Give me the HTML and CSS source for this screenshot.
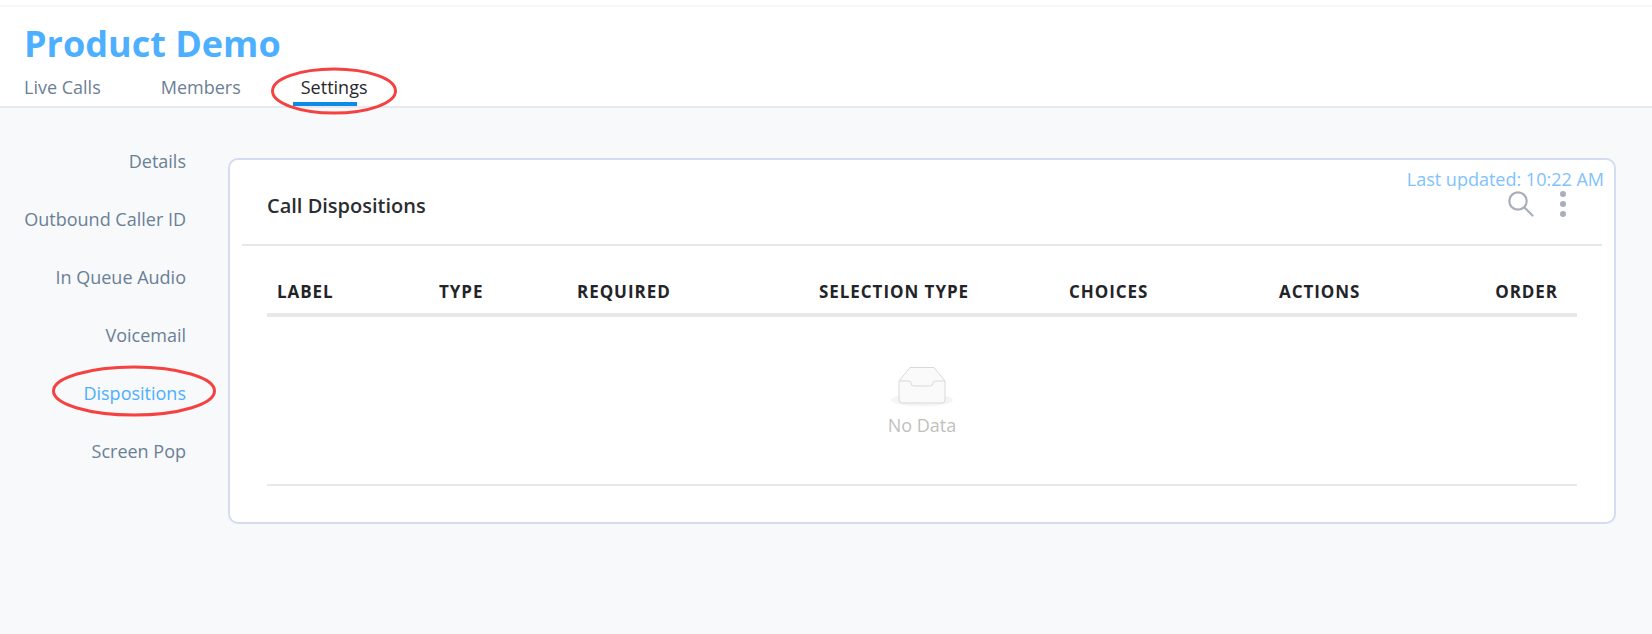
FILE: index.html
```html
<!DOCTYPE html>
<html lang="en">
<head>
<meta charset="utf-8">
<title>Product Demo</title>
<link rel="stylesheet" href="styles.css">
</head>
<body>
<div class="strip"></div>
<header class="top">
  <h1 class="title">Product Demo</h1>
  <nav class="tabs">
    <a class="tab">Live Calls</a>
    <a class="tab">Members</a>
    <a class="tab tab-active">Settings</a>
  </nav>
</header>
<main class="main">
  <aside class="side">
    <a class="side-item">Details</a>
    <a class="side-item">Outbound Caller ID</a>
    <a class="side-item">In Queue Audio</a>
    <a class="side-item">Voicemail</a>
    <a class="side-item side-active">Dispositions</a>
    <a class="side-item">Screen Pop</a>
  </aside>
  <section class="card">
    <div class="updated">Last updated: 10:22 AM</div>
    <div class="card-head">
      <h2 class="card-title">Call Dispositions</h2>
      <div class="tools">
        <svg class="icon-search" width="26" height="26" viewBox="0 0 26 26" fill="none" stroke="#a9afba" stroke-width="2.2"><circle cx="10" cy="10" r="8.7"/><path d="M16.5 16.5l8 8" stroke-linecap="round"/></svg>
        <svg class="icon-more" width="8" height="28" viewBox="0 0 8 28" fill="#a9afba"><circle cx="4" cy="4" r="3"/><circle cx="4" cy="14" r="3"/><circle cx="4" cy="24" r="3"/></svg>
      </div>
    </div>
    <div class="table">
      <div class="thead">
        <div>LABEL</div>
        <div>TYPE</div>
        <div>REQUIRED</div>
        <div>SELECTION TYPE</div>
        <div>CHOICES</div>
        <div>ACTIONS</div>
        <div class="order">ORDER</div>
      </div>
      <div class="empty">
        <svg width="62" height="42" viewBox="0 0 62 42">
          <ellipse cx="31" cy="35" rx="31" ry="6.5" fill="#f5f5f5"/>
          <path d="M8 16L19 2.5H43L54 16V35a3 3 0 0 1-3 3H11a3 3 0 0 1-3-3Z" fill="#fafafa" stroke="#d9d9d9" stroke-width="1"/>
          <path d="M8 16H18a2 2 0 0 1 2 2v0a3 3 0 0 0 3 3H39a3 3 0 0 0 3-3v0a2 2 0 0 1 2-2H54" fill="none" stroke="#d9d9d9" stroke-width="1"/>
        </svg>
        <div class="empty-text">No Data</div>
      </div>
    </div>
  </section>
</main>
<svg class="mark mark-tab" width="128" height="50" viewBox="0 0 128 50"><ellipse cx="64" cy="25" rx="61.5" ry="22"/></svg>
<svg class="mark mark-side" width="166" height="54" viewBox="0 0 166 54"><ellipse cx="83" cy="27" rx="80.5" ry="24"/></svg>
</body>
</html>
```
FILE: styles.css
```css
* { box-sizing: border-box; }
html, body { margin: 0; padding: 0; }
body {
  position: relative;
  width: 1652px;
  height: 634px;
  overflow: hidden;
  background: #f7f9fb;
  font-family: "Open Sans", "Liberation Sans", sans-serif;
}
.strip {
  height: 7px;
  background: #fff;
  border-bottom: 2px solid #f7f7f7;
}
.top {
  height: 101px;
  background: #fff;
  border-bottom: 2px solid #e6e9ef;
  padding: 17px 0 0 24px;
}
.title {
  margin: 0;
  font-size: 36px;
  line-height: 40px;
  font-weight: 700;
  color: #4dafff;
}
.tabs { display: flex; margin-top: 12px; }
.tab {
  font-size: 18px;
  line-height: 22px;
  color: #6b7f95;
  margin-right: 60px;
}
.tab-active {
  position: relative;
  color: #26282c;
}
.tab-active::after {
  content: "";
  position: absolute;
  left: -8px;
  width: 64px;
  top: 26px;
  height: 4px;
  background: #0c8ce6;
}
.main { display: flex; align-items: flex-start; padding-top: 30px; }
.side {
  width: 228px;
  padding: 12px 42px 0 0;
  display: flex;
  flex-direction: column;
  align-items: flex-end;
  gap: 36px;
}
.side-item {
  font-size: 18px;
  line-height: 22px;
  color: #6b7f95;
  white-space: nowrap;
}
.side-active { color: #4dafff; }
.card {
  position: relative;
  width: 1388px;
  height: 366px;
  margin-top: 20px;
  background: #fff;
  border: 2px solid #d3dcf0;
  border-radius: 10px;
  padding: 0 12px;
}
.updated {
  position: absolute;
  right: 10px;
  top: 8px;
  font-size: 18px;
  line-height: 22px;
  color: #7fc2fd;
}
.card-head {
  height: 86px;
  border-bottom: 2px solid #e8e8e8;
  display: flex;
  align-items: center;
  justify-content: space-between;
  padding: 8px 35px 0 25px;
}
.card-title {
  margin: 0;
  font-size: 20px;
  line-height: 24px;
  font-weight: 600;
  color: #2b2d30;
}
.tools { display: flex; align-items: center; gap: 25px; margin-top: -4px; }
.tools svg { display: block; }
.table { margin: 0 25px; border-bottom: 2px solid #e8e8e8; height: 240px; }
.thead {
  display: grid;
  grid-template-columns: 162px 138px 242px 250px 210px 1fr auto;
  height: 71px;
  padding: 35px 19px 0 10px;
  border-bottom: 4px solid #e8e8e8;
  font-size: 17px;
  line-height: 22px;
  font-weight: 700;
  letter-spacing: 0.95px;
  color: #232428;
}
.empty {
  display: flex;
  flex-direction: column;
  align-items: center;
  padding-top: 48px;
}
.empty svg { display: block; }
.empty-text {
  margin-top: 7px;
  font-size: 18px;
  line-height: 22px;
  color: #bfbfbf;
}
.mark { position: absolute; fill: none; stroke: #f64141; stroke-width: 3; }
.mark-tab { left: 270px; top: 66px; }
.mark-side { left: 51px; top: 364px; }
```
